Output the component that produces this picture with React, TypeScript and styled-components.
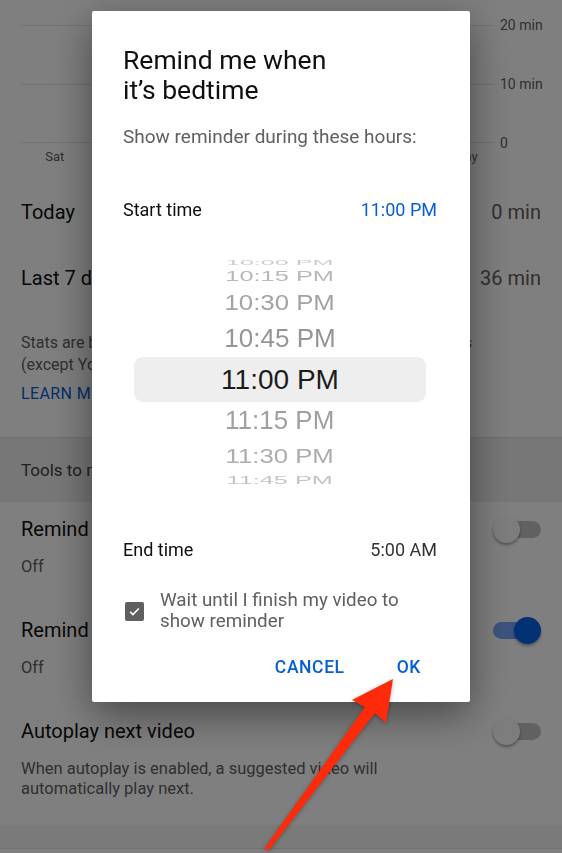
import React from 'react';
import styled, { createGlobalStyle } from 'styled-components';

const GlobalStyle = createGlobalStyle`
    body {
        margin: 0;
        background: #ffffff;
        font-family: Roboto, "Noto Sans", Arial, sans-serif;
        color: #0f0f0f;
        overflow: hidden;
    }
`;

const Page = styled.div`
    width: 562px;
    background: #ffffff;
`;

// watch time chart
const Chart = styled.div`
    height: 179px;
    padding: 0 21px;
    box-sizing: border-box;
`;

const PlotRow = styled.div`
    display: flex;
    padding-top: 25px;
`;

const Plot = styled.div`
    flex: 1;
    height: 118px;
    border-top: 1px solid #e4e4e4;
    border-bottom: 1px solid #e4e4e4;
    box-sizing: border-box;
    display: grid;
    grid-template-columns: repeat(7, 1fr);
    align-items: end;
    position: relative;
    &::before{
        content: "";
        position: absolute;
        left: 0;
        right: 0;
        top: 58px;
        border-top: 1px solid #e4e4e4;
    }
`;

const BarSlot = styled.div`
    display: flex;
    justify-content: center;
`;

const Bar = styled.div<{h:number}>`
    width: 52px;
    height: ${props => props.h}px;
    background: #065fd4;
    margin-bottom: -1px;
`;

const Axis = styled.div`
    width: 47px;
    height: 134px;
    margin: -8px 0;
    padding-left: 6px;
    box-sizing: border-box;
    display: flex;
    flex-direction: column;
    justify-content: space-between;
    font-size: 14px;
    line-height: 16px;
    color: #606060;
    white-space: nowrap;
`;

const Days = styled.div`
    display: grid;
    grid-template-columns: repeat(7, 1fr);
    width: 473px;
    margin-top: 7px;
    font-size: 13px;
    line-height: 14px;
    color: #606060;
    text-align: center;
`;

const StatRow = styled.div`
    height: 66px;
    padding: 0 21px;
    display: flex;
    align-items: center;
    justify-content: space-between;
    font-size: 20px;
`;

const StatValue = styled.span`
    color: #606060;
`;

const Notes = styled.div`
    padding: 21px 21px 32px;
    border-bottom: 1px solid #e0e0e0;
`;

const Note = styled.div`
    font-size: 16px;
    line-height: 22px;
    color: #606060;
    padding-right: 50px;
`;

const LearnMore = styled.div`
    margin-top: 7px;
    font-size: 16px;
    line-height: 22px;
    color: #065fd4;
    letter-spacing: 0.4px;
`;

const SectionHeader = styled.div`
    height: 64px;
    padding: 0 21px;
    display: flex;
    align-items: center;
    background: #eeeeee;
    font-size: 17px;
    color: #404040;
`;

const SettingRow = styled.div`
    padding: 14px 21px 26px;
    display: flex;
    align-items: flex-start;
    justify-content: space-between;
`;

const SettingText = styled.div`
    max-width: 400px;
`;

const SettingTitle = styled.div`
    font-size: 20px;
    line-height: 26px;
`;

const SettingSub = styled.div`
    margin-top: 15px;
    font-size: 16.5px;
    line-height: 20px;
    color: #606060;
`;

const Toggle = styled.div<{on:boolean}>`
    position: relative;
    width: 48px;
    height: 27px;
    flex-shrink: 0;
    &::before{
        content: "";
        position: absolute;
        top: 5px;
        left: ${props => props.on ? "0" : "10px"};
        width: 38px;
        height: 17px;
        border-radius: 9px;
        background: ${props => props.on ? "#7aa6ff" : "#c2c2c2"};
    }
    &::after{
        content: "";
        position: absolute;
        top: 0;
        left: ${props => props.on ? "21px" : "0"};
        width: 27px;
        height: 27px;
        border-radius: 50%;
        background: ${props => props.on ? "#0764e8" : "#fafafa"};
        box-shadow: 0 2px 3px rgba(0,0,0,0.35);
    }
`;

const BottomBand = styled.div`
    height: 23px;
    background: #f4f4f4;
    border-bottom: 1px solid #e0e0e0;
`;

const Scrim = styled.div`
    position: fixed;
    inset: 0;
    background: rgba(0,0,0,0.5);
`;

// bedtime dialog
const Dialog = styled.div`
    position: fixed;
    top: 11px;
    left: 92px;
    width: 378px;
    height: 691px;
    box-sizing: border-box;
    padding: 34px 33px 17px 31px;
    background: #ffffff;
    border-radius: 2px;
    box-shadow: 0 12px 40px rgba(0,0,0,0.45);
    display: flex;
    flex-direction: column;
`;

const Title = styled.div`
    font-size: 26.5px;
    line-height: 30px;
    color: #0f0f0f;
`;

const Subtitle = styled.div`
    margin-top: 21px;
    font-size: 19px;
    line-height: 22px;
    color: #606060;
`;

const TimeRow = styled.div<{gap:number}>`
    margin-top: ${props => props.gap}px;
    height: 40px;
    display: flex;
    align-items: center;
    justify-content: space-between;
    font-size: 18px;
`;

const TimeValue = styled.span<{active:boolean}>`
    color: ${props => props.active ? "#065fd4" : "#333333"};
`;

const Picker = styled.div`
    margin-top: 28px;
    height: 233px;
    overflow: hidden;
    display: flex;
    flex-direction: column;
    align-items: center;
    font-family: "Liberation Sans", Arial, sans-serif;
`;

const PickerItem = styled.div<{h:number; squash:number; tone:string}>`
    flex-shrink: 0;
    height: ${props => props.h}px;
    line-height: ${props => props.h}px;
    font-size: 26px;
    color: ${props => props.tone};
    transform: scale(${props => 0.95 + props.squash * 0.05}, ${props => props.squash});
    white-space: nowrap;
`;

const PickerSelected = styled.div`
    flex-shrink: 0;
    width: 292px;
    height: 45px;
    line-height: 45px;
    border-radius: 9px;
    background: #eeeeee;
    text-align: center;
    font-size: 28px;
    color: #1c1c1c;
`;

const CheckRow = styled.label`
    margin-top: 21px;
    display: flex;
    align-items: center;
    gap: 16px;
    padding-left: 2px;
`;

const CheckBox = styled.span`
    width: 19px;
    height: 19px;
    flex-shrink: 0;
    border-radius: 2px;
    background: #5f5f5f;
    display: flex;
    align-items: center;
    justify-content: center;
`;

const CheckText = styled.span`
    font-size: 18.8px;
    line-height: 21px;
    color: #606060;
    max-width: 270px;
`;

const Actions = styled.div`
    margin-top: 17px;
    height: 36px;
    display: flex;
    justify-content: flex-end;
    gap: 20px;
`;

const TextButton = styled.button`
    border: none;
    background: none;
    padding: 0 16px;
    font-family: Roboto, "Noto Sans", Arial, sans-serif;
    font-size: 17.5px;
    font-weight: 500;
    letter-spacing: 0.6px;
    color: #065fd4;
`;

const Pointer = styled.svg`
    position: fixed;
    left: 0;
    top: 0;
    width: 562px;
    height: 853px;
    pointer-events: none;
    filter: drop-shadow(0 1px 2px rgba(0,0,0,0.3));
`;

const wheel = [
    { t: "10:00 PM", h: 10, s: 0.28, c: "#cccccc" },
    { t: "10:15 PM", h: 19, s: 0.55, c: "#b8b8b8" },
    { t: "10:30 PM", h: 34, s: 0.82, c: "#a3a3a3" },
    { t: "10:45 PM", h: 37, s: 1, c: "#959595" },
];

const wheelBelow = [
    { t: "11:15 PM", h: 37, s: 0.97, c: "#a0a0a0" },
    { t: "11:30 PM", h: 35, s: 0.8, c: "#adadad" },
    { t: "11:45 PM", h: 13, s: 0.42, c: "#c4c4c4" },
];

const days = ["Sat", "Sun", "Mon", "Tue", "Wed", "Thu", "Today"];

const App = () => {
    return (
        <>
            <GlobalStyle />
            <Page>
                <Chart>
                    <PlotRow>
                        <Plot>
                            {days.map((d, i) => (
                                <BarSlot key={d}>{i === 2 && <Bar h={143} />}</BarSlot>
                            ))}
                        </Plot>
                        <Axis>
                            <span>20 min</span>
                            <span>10 min</span>
                            <span>0</span>
                        </Axis>
                    </PlotRow>
                    <Days>
                        {days.map(d => <span key={d}>{d}</span>)}
                    </Days>
                </Chart>
                <StatRow><span>Today</span><StatValue>0 min</StatValue></StatRow>
                <StatRow><span>Last 7 days</span><StatValue>36 min</StatValue></StatRow>
                <Notes>
                    <Note>Stats are based on your YouTube watch history and all products (except YouTube Music)</Note>
                    <LearnMore>LEARN MORE</LearnMore>
                </Notes>
                <SectionHeader>Tools to manage your time</SectionHeader>
                <SettingRow>
                    <SettingText>
                        <SettingTitle>Remind me to take a break</SettingTitle>
                        <SettingSub>Off</SettingSub>
                    </SettingText>
                    <Toggle on={false} />
                </SettingRow>
                <SettingRow>
                    <SettingText>
                        <SettingTitle>Remind me when it's bedtime</SettingTitle>
                        <SettingSub>Off</SettingSub>
                    </SettingText>
                    <Toggle on={true} />
                </SettingRow>
                <SettingRow>
                    <SettingText>
                        <SettingTitle>Autoplay next video</SettingTitle>
                        <SettingSub>When autoplay is enabled, a suggested video will automatically play next.</SettingSub>
                    </SettingText>
                    <Toggle on={false} />
                </SettingRow>
                <BottomBand />
            </Page>

            <Scrim />

            <Dialog>
                <Title>Remind me when<br />it’s bedtime</Title>
                <Subtitle>Show reminder during these hours:</Subtitle>
                <TimeRow gap={41}>
                    <span>Start time</span>
                    <TimeValue active={true}>11:00 PM</TimeValue>
                </TimeRow>
                <Picker>
                    {wheel.map(w => (
                        <PickerItem key={w.t} h={w.h} squash={w.s} tone={w.c}>{w.t}</PickerItem>
                    ))}
                    <PickerSelected>11:00 PM</PickerSelected>
                    {wheelBelow.map(w => (
                        <PickerItem key={w.t} h={w.h} squash={w.s} tone={w.c}>{w.t}</PickerItem>
                    ))}
                </Picker>
                <TimeRow gap={39}>
                    <span>End time</span>
                    <TimeValue active={false}>5:00 AM</TimeValue>
                </TimeRow>
                <CheckRow>
                    <CheckBox>
                        <svg width="13" height="13" viewBox="0 0 24 24">
                            <path d="M4 12.5l5 5L20 6.5" fill="none" stroke="#ffffff" strokeWidth="3" />
                        </svg>
                    </CheckBox>
                    <CheckText>Wait until I finish my video to show reminder</CheckText>
                </CheckRow>
                <Actions>
                    <TextButton>CANCEL</TextButton>
                    <TextButton>OK</TextButton>
                </Actions>
            </Dialog>

            <Pointer viewBox="0 0 562 853">
                <polygon
                    points="393,679 386,723 375,713 269,850 264,849 365,707 352,700"
                    fill="#fe2a0a"
                />
            </Pointer>
        </>
    );
}

export default App;
